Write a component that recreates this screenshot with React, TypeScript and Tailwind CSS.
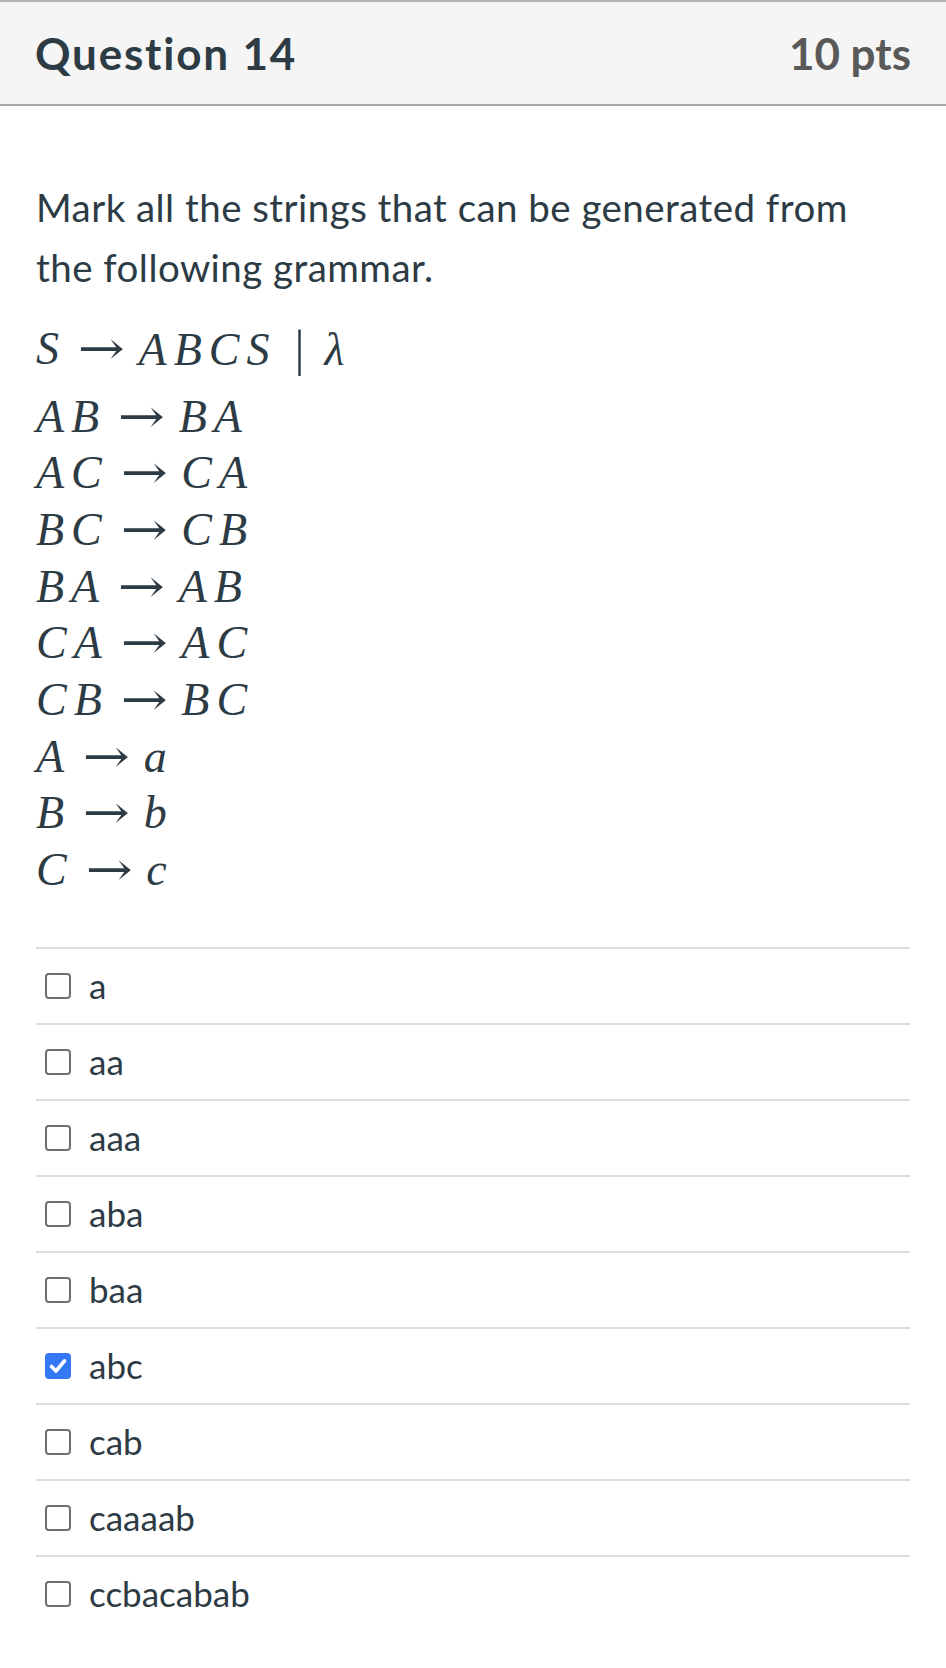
import React from 'react';

interface OptionProps {
  label: string;
  checked?: boolean;
}

const Check: React.FC<{ checked?: boolean }> = ({ checked }) =>
  checked ? (
    <span className="w-[26px] h-[26px] rounded-[4px] bg-[#3478f6] flex items-center justify-center shrink-0">
      <svg width="22" height="22" viewBox="0 0 22 22" fill="none">
        <path d="M4.5 11.5 L9 16 L17.5 5.8" stroke="white" strokeWidth="3.6" strokeLinecap="round" strokeLinejoin="round" />
      </svg>
    </span>
  ) : (
    <span className="w-[26px] h-[26px] rounded-[4px] border-2 border-[#6f6f6f] bg-white shrink-0" />
  );

const Option: React.FC<OptionProps> = ({ label, checked }) => (
  <div className="h-[76px] border-t-2 border-[#dcdcdc] flex items-center pl-[9px] gap-[18px]">
    <Check checked={checked} />
    <span className="text-[35px] text-[#2d3b45] leading-none">{label}</span>
  </div>
);

// one production of the grammar, laid out like a rendered math line
const Rule: React.FC<{ lhs: string; rhs: React.ReactNode; className?: string }> = ({ lhs, rhs, className = '' }) => (
  <div className={`h-[56.7px] flex items-center ${className}`}>
    <span className="italic tracking-[7px]">{lhs}</span>
    <span className="not-italic inline-block ml-[16px] mr-[18px] text-[46px] font-['DejaVu_Serif',serif] scale-x-[1.22]">→</span>
    <span className="italic tracking-[7px]">{rhs}</span>
  </div>
);

const options = [
  { label: 'a' },
  { label: 'aa' },
  { label: 'aaa' },
  { label: 'aba' },
  { label: 'baa' },
  { label: 'abc', checked: true },
  { label: 'cab' },
  { label: 'caaaab' },
  { label: 'ccbacabab' },
];

export default function App() {
  return (
    <div className="w-[946px] min-h-[1668px] bg-white font-['Lato','Noto_Sans',sans-serif]">
      {/* Question header */}
      <div className="h-[106px] bg-[#f5f5f5] border-t-2 border-b-2 border-t-[#b3b3b3] border-b-[#a8a8a8] flex items-center justify-between px-[35px]">
        <h2 className="text-[44px] font-bold text-[#2d3b45] leading-none tracking-[1.8px]">Question 14</h2>
        <div className="text-[44px] font-bold text-[#595959] leading-none">10 pts</div>
      </div>

      <div className="px-[36px] pt-[71px]">
        <p className="text-[38.5px] leading-[60px] tracking-[0.45px] text-[#2d3b45]">
          Mark all the strings that can be generated from the following grammar.
        </p>

        {/* Grammar */}
        <div className="mt-[23px] text-[46px] text-[#2d3b45] font-['Liberation_Serif','Times_New_Roman',serif]">
          <Rule
            className="mb-[11px]"
            lhs="S"
            rhs={
              <>
                ABCS
                <span className="not-italic tracking-normal ml-[18px] mr-[20px] text-[50px]">|</span>
                λ
              </>
            }
          />
          <Rule lhs="AB" rhs="BA" />
          <Rule lhs="AC" rhs="CA" />
          <Rule lhs="BC" rhs="CB" />
          <Rule lhs="BA" rhs="AB" />
          <Rule lhs="CA" rhs="AC" />
          <Rule lhs="CB" rhs="BC" />
          <Rule lhs="A" rhs="a" />
          <Rule lhs="B" rhs="b" />
          <Rule lhs="C" rhs="c" />
        </div>

        {/* Answers */}
        <div className="mt-[49px]">
          {options.map((o) => (
            <Option key={o.label} label={o.label} checked={o.checked} />
          ))}
        </div>
      </div>
    </div>
  );
}
